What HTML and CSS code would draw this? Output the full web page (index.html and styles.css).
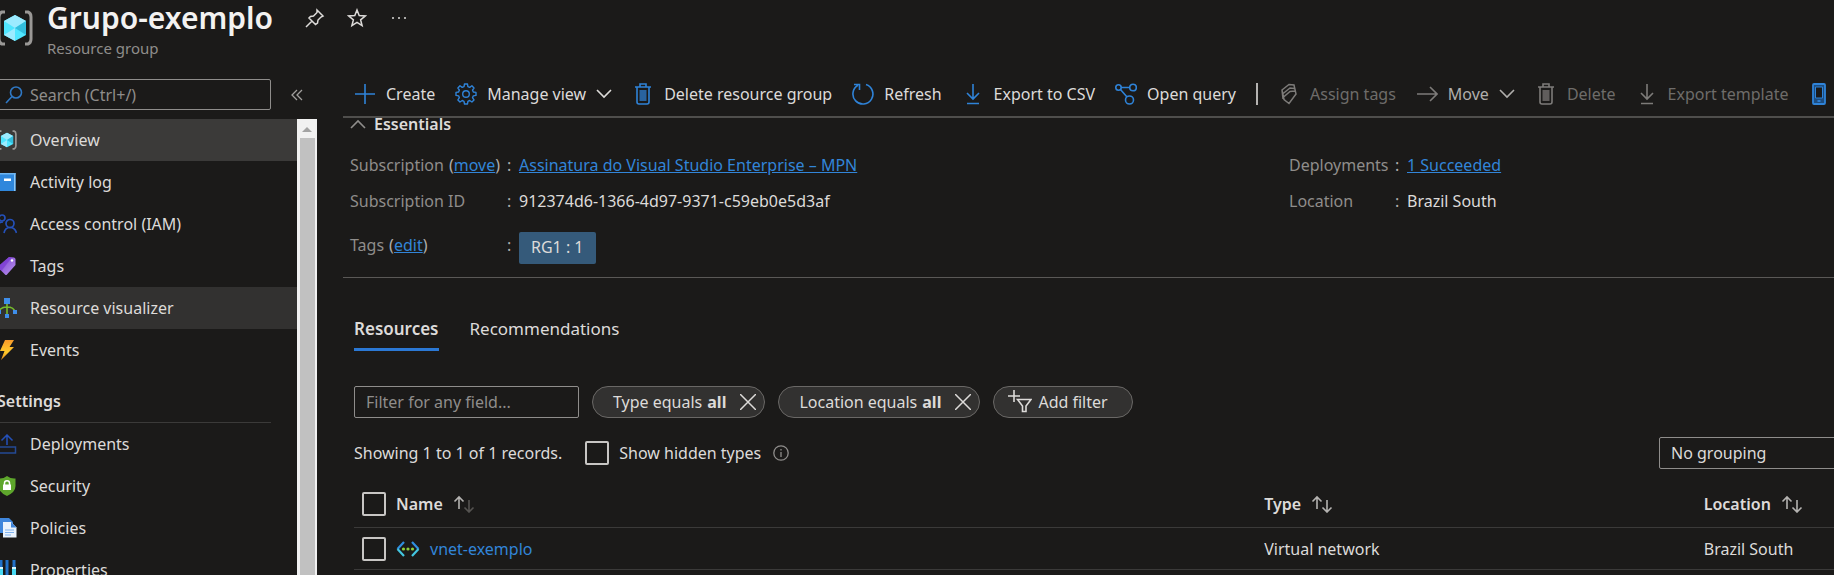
FILE: index.html
```
<!DOCTYPE html>
<html lang="en">
<head>
    <meta charset="utf-8">
    <title>Grupo-exemplo</title>
    <link rel="stylesheet" href="styles.css">
</head>
<body>
    <svg class="defs">
        <defs>
            <symbol id="group" viewBox="0 0 36 36">
                <path d="M8 2H5Q2 3 2 7v22q0 4 3 5h3M28 2h3q3 1 3 5v22q0 4-3 5h-3" fill="none" stroke="#9a9896" stroke-width="3"/>
                <path d="M18 5l11 6v14l-11 6-11-6V11z" fill="#50e6ff"/>
                <path d="M18 5l11 6-11 7-11-7z" fill="#9cebff"/>
                <path d="M18 18v13L7 25z" fill="#9cebff"/>
                <path d="M18 18l11-7v14z" fill="#32bedd"/>
            </symbol>
            <symbol id="chevron" viewBox="0 0 16 10">
                <path d="M1 1l7 7 7-7" fill="none" stroke="currentColor" stroke-width="1.6"/>
            </symbol>
            <symbol id="trash" viewBox="0 0 22 22">
                <path d="M3 4h16M8 3.500V1h6v2.500M5 4v15q0 2 2 2h8q2 0 2-2V4" fill="none" stroke="currentColor" stroke-width="1.6"/>
                <path d="M7.500 7h7v11h-7z" fill="currentColor" opacity=".7"/>
            </symbol>
            <symbol id="download" viewBox="0 0 22 22">
                <path d="M11 1v15M5 10l6 6 6-6M5 20.500h12" fill="none" stroke="currentColor" stroke-width="1.6"/>
            </symbol>
            <symbol id="sort" viewBox="0 0 22 18">
                <path d="M6 14V2M1.500 6.500L6 2l4.500 4.500" fill="none" stroke="#b5b3b1" stroke-width="1.6"/>
                <path class="down" d="M16 5v12M11.500 12.500L16 17l4.500-4.500" fill="none" stroke="currentColor" stroke-width="1.6"/>
            </symbol>
            <symbol id="close" viewBox="0 0 16 16">
                <path d="M0 0l16 16M16 0L0 16" fill="none" stroke="currentColor" stroke-width="1.5"/>
            </symbol>
            <linearGradient id="purple" x1="0" y1="0" x2="1" y2="1">
                <stop offset="0" stop-color="#7b3fd0"/><stop offset="1" stop-color="#b893ee"/>
            </linearGradient>
            <linearGradient id="bolt" x1="0" y1="0" x2="0" y2="1">
                <stop offset="0" stop-color="#f79a2b"/><stop offset=".6" stop-color="#ffca2c"/><stop offset="1" stop-color="#e88a1c"/>
            </linearGradient>
        </defs>
    </svg>

    <div class="page">
        <header class="header">
            <svg class="header-icon"><use href="#group"/></svg>
            <div class="header-text">
                <h1>Grupo-exemplo</h1>
                <p>Resource group</p>
            </div>
            <div class="header-actions">
                <button aria-label="Pin">
                    <svg width="20" height="20" viewBox="0 0 20 20" fill="none" stroke="currentColor" stroke-width="1.5"><path d="M12 2l6 6-2 1-3 3-.500 3-2 1.500L4 10l1.500-1.500 3-.500L12 4.500zM7 13l-6 6"/></svg>
                </button>
                <button aria-label="Favorite">
                    <svg width="20" height="20" viewBox="0 0 20 20" fill="none" stroke="currentColor" stroke-width="1.5"><path d="M10 2l2.200 5.600 6 .400-4.600 3.800 1.500 5.900L10 14.400l-5.100 3.300 1.500-5.900L1.800 8l6-.400z"/></svg>
                </button>
                <button aria-label="More">
                    <svg width="20" height="20" viewBox="0 0 20 20" fill="currentColor"><circle cx="4" cy="10" r="1"/><circle cx="10" cy="10" r="1"/><circle cx="16" cy="10" r="1"/></svg>
                </button>
            </div>
        </header>

        <div class="columns">
            <aside class="sidebar">
                <div class="search-row">
                    <label class="search">
                        <svg width="18" height="18" viewBox="0 0 18 18" fill="none" stroke="#2f78c4" stroke-width="1.6"><circle cx="11" cy="6.500" r="5.500"/><path d="M7 10.500L1 17"/></svg>
                        <input type="text" placeholder="Search (Ctrl+/)" aria-label="Search">
                    </label>
                    <button class="collapse" aria-label="Collapse">
                        <svg width="12" height="12" viewBox="0 0 12 12" fill="none" stroke="currentColor" stroke-width="1.3"><path d="M6 1L1 6l5 5M11 1L6 6l5 5"/></svg>
                    </button>
                </div>
                <div class="menu-wrap">
                    <nav class="menu">
                        <a href="#" class="active"><svg viewBox="0 0 36 36"><use href="#group"/></svg>Overview</a>
                        <a href="#"><svg viewBox="0 0 20 20"><path d="M1 1h17.500v18H1z" fill="#2f87dc"/><path d="M17 1h1.500v18H17z" fill="#8cc8f8"/><path d="M1 1h17.500v1.500H1z" fill="#6fb5f0"/><path d="M7 6.500h7v2.500H7z" fill="#fff"/></svg>Activity log</a>
                        <a href="#"><svg viewBox="0 0 20 20" fill="none" stroke="#2450b8" stroke-width="1.7"><circle cx="5" cy="4" r="3"/><path d="M0 12q1-4 6-4"/><circle cx="13" cy="9.500" r="4"/><path d="M7 19q1-5.500 6-5.500t6.500 5.500"/></svg>Access control (IAM)</a>
                        <a href="#"><svg viewBox="0 0 20 20"><path d="M12 1l5 .500q1.500.500 1.500 2V9L10 18.500q-1 1-2 0L1.500 12q-1-1 0-2z" fill="url(#purple)"/><path d="M12 1l3 .300L4.500 15l-3-3q-1-1 0-2z" fill="#7633d0" opacity=".6"/><circle cx="15" cy="4.500" r="1.200" fill="#fff"/></svg>Tags</a>
                        <a href="#" class="hover"><svg viewBox="0 0 20 20"><path d="M10 4v13M2 14q1-5 8-5t8 5" fill="none" stroke="#76bc2d" stroke-width="1.6"/><path d="M7 0h6v6H7zM0 12h4v4H0zM16 12h4v4h-4zM8 16h4v4H8z" fill="#3f8eea"/></svg>Resource visualizer</a>
                        <a href="#"><svg viewBox="0 0 20 20"><path d="M8 0h9l-4.500 7H17L4 20l3.500-9H3z" fill="url(#bolt)"/></svg>Events</a>
                        <h2>Settings</h2>
                        <a href="#"><svg viewBox="0 0 20 20" fill="none" stroke="#2450b8" stroke-width="1.5"><path d="M10 11V1M4.500 6.500L10 1l5.500 5.500"/><path d="M1 13h17.500v6H1z" stroke="#244a94"/></svg>Deployments</a>
                        <a href="#"><svg viewBox="0 0 20 20"><path d="M10 0q4 3 8.500 2.500V10q0 6-8.500 10Q1.500 16 1.500 10V2.500Q6 3 10 0z" fill="#5ea62c"/><path d="M6 8.500h8v5.500H6z" fill="#fff"/><path d="M7.500 9V7q0-2.300 2.500-2.300T12.500 7v2" fill="none" stroke="#fff" stroke-width="1.5"/></svg>Security</a>
                        <a href="#"><svg viewBox="0 0 20 20"><path d="M1 0h11l4 4v11H1z" fill="#3f86dc"/><path d="M6 4h8l5.500 5.500V19.500H6z" fill="#eaf3fd"/><path d="M14 4l5.500 5.500H14z" fill="#3f86dc"/><path d="M8 12h9M8 14.500h9M8 17h6" stroke="#7fb2ee" stroke-width="1.200"/></svg>Policies</a>
                        <a href="#"><svg viewBox="0 0 20 20"><path d="M2.500 0h3v20h-3zM8.500 0h3v20h-3zM15.500 0h3v20h-3z" fill="#2070c8"/><path d="M2 7h4v13H2zM15 7h4v13h-4z" fill="#48d8f2"/><path d="M2 7h4v2H2zM15 7h4v2h-4z" fill="#d5f6ff"/></svg>Properties</a>
                    </nav>
                    <div class="scrollbar"><span class="arrow"></span><span class="thumb"></span></div>
                </div>
            </aside>

            <main class="main">
                <div class="toolbar">
                    <button><svg class="icon" viewBox="0 0 22 22"><path d="M11 1v20M1 11h20" fill="none" stroke="currentColor" stroke-width="1.6"/></svg>Create</button>
                    <button><svg class="icon" viewBox="0 0 22 22" fill="none" stroke="currentColor" stroke-width="1.4" stroke-linejoin="round"><circle cx="11" cy="11" r="3.300"/><path d="M9.500 1h3l.400 2.600 1.800.800 2.200-1.600 2.100 2.200-1.500 2.100.800 1.900 2.700.400v3l-2.700.500-.800 1.800 1.500 2.200-2.100 2.100-2.200-1.500-1.800.800-.400 2.700h-3l-.500-2.700-1.800-.800L5 19l-2.100-2.100 1.500-2.200-.800-1.800L1 12.400v-3L3.600 9l.800-1.900L2.900 5 5 2.800l2.200 1.600L9 3.600z"/></svg>Manage view<svg class="chevron"><use href="#chevron"/></svg></button>
                    <button><svg class="icon"><use href="#trash"/></svg>Delete resource group</button>
                    <button><svg class="icon" viewBox="0 0 22 22" fill="none" stroke="currentColor" stroke-width="1.6"><path d="M14 1.500A10 10 0 1 1 6 2.300M2 1.500h5.500V7"/></svg>Refresh</button>
                    <button><svg class="icon"><use href="#download"/></svg>Export to CSV</button>
                    <button><svg class="icon" viewBox="0 0 22 22" fill="none" stroke="currentColor" stroke-width="1.6"><circle cx="3.500" cy="4.500" r="2.700"/><circle cx="18" cy="4.500" r="3.300"/><circle cx="14.500" cy="17" r="4"/><path d="M6 4.500h8.700M5.500 6.500l6.500 7.500"/></svg>Open query</button>
                    <span class="separator"></span>
                    <button disabled><svg class="icon" viewBox="0 0 22 22" fill="none" stroke="currentColor" stroke-width="1.5"><path d="M4 7l7-5.500 5 .500 2 9-7 9.500-5-4zM4 7l1 9M4.500 11L12 5l4.500.500M5 14.500l7-6 5-.500"/></svg>Assign tags</button>
                    <button class="dim"><svg class="icon" viewBox="0 0 22 22"><path d="M1 11h20M14 4l7 7-7 7" fill="none" stroke="currentColor" stroke-width="1.6"/></svg>Move<svg class="chevron"><use href="#chevron"/></svg></button>
                    <button disabled><svg class="icon"><use href="#trash"/></svg>Delete</button>
                    <button disabled><svg class="icon"><use href="#download"/></svg>Export template</button>
                    <button aria-label="Open in mobile"><svg class="icon" viewBox="0 0 22 22" fill="none" stroke="currentColor" stroke-width="1.800"><rect x="5" y="1" width="12" height="20" rx="1" fill="#1d4d80"/><path d="M7.500 4h7v11h-7z" fill="#1b1a19" stroke-width="1"/><path d="M9.500 18h3"/></svg></button>
                </div>

                <section class="essentials">
                    <button class="essentials-toggle"><svg class="chevron up"><use href="#chevron"/></svg><span>Essentials</span></button>
                    <div class="details">
                        <dl>
                            <div><dt>Subscription <i>(<a href="#">move</a>)</i></dt><dd><a href="#">Assinatura do Visual Studio Enterprise – MPN</a></dd></div>
                            <div><dt>Subscription ID</dt><dd>912374d6-1366-4d97-9371-c59eb0e5d3af</dd></div>
                            <div class="tags"><dt>Tags <i>(<a href="#">edit</a>)</i></dt><dd><span class="tag">RG1 : 1</span></dd></div>
                        </dl>
                        <dl class="short">
                            <div><dt>Deployments</dt><dd><a href="#">1 Succeeded</a></dd></div>
                            <div><dt>Location</dt><dd>Brazil South</dd></div>
                        </dl>
                    </div>
                </section>

                <section class="resources">
                    <div class="tabs" role="tablist">
                        <button role="tab" aria-selected="true" class="selected">Resources</button>
                        <button role="tab" aria-selected="false">Recommendations</button>
                    </div>
                    <div class="filters">
                        <input type="text" class="filter" placeholder="Filter for any field..." aria-label="Filter for any field">
                        <button class="pill">Type equals <b>all</b><svg><use href="#close"/></svg></button>
                        <button class="pill">Location equals <b>all</b><svg><use href="#close"/></svg></button>
                        <button class="pill add"><svg viewBox="0 0 24 24" fill="none" stroke="currentColor" stroke-width="1.6"><path d="M6 0v12M0 6h12M9.500 9.500h13.500l-5 6.500v5.500h-3.500V16z"/></svg>Add filter</button>
                    </div>
                    <div class="records">
                        <span class="count">Showing 1 to 1 of 1 records.</span>
                        <input type="checkbox" id="hidden">
                        <label for="hidden">Show hidden types</label>
                        <svg width="16" height="16" viewBox="0 0 16 16" fill="none" stroke="#8f8d8b" stroke-width="1.3"><circle cx="8" cy="8" r="7.200"/><path d="M8 7v5M8 4v1.500"/></svg>
                        <select class="grouping" aria-label="Grouping"><option>No grouping</option></select>
                    </div>
                    <table>
                        <thead>
                            <tr>
                                <th class="name"><div><input type="checkbox" aria-label="Select all">Name<svg class="sort up-only"><use href="#sort"/></svg></div></th>
                                <th class="type"><div>Type<svg class="sort"><use href="#sort"/></svg></div></th>
                                <th><div>Location<svg class="sort"><use href="#sort"/></svg></div></th>
                            </tr>
                        </thead>
                        <tbody>
                            <tr>
                                <td class="name"><div><input type="checkbox" aria-label="Select vnet-exemplo"><svg width="24" height="16" viewBox="0 0 24 16"><path d="M8 1L1.500 8M16 1l6.500 7" fill="none" stroke="#2f8fe0" stroke-width="2.200"/><path d="M1.500 8L8 15M22.500 8L16 15" fill="none" stroke="#43c6e0" stroke-width="2.200"/><g fill="#8bd03c"><circle cx="7.500" cy="8" r="1.600"/><circle cx="12" cy="8" r="1.600"/><circle cx="16.500" cy="8" r="1.600"/></g></svg><a href="#">vnet-exemplo</a></div></td>
                                <td>Virtual network</td>
                                <td>Brazil South</td>
                            </tr>
                        </tbody>
                    </table>
                </section>
            </main>
        </div>
    </div>
</body>
</html>
```
FILE: styles.css
```
* {
    box-sizing: border-box;
}

body {
    margin: 0;
    font-family: "Noto Sans", "Open Sans", sans-serif;
    font-size: 16px;
    line-height: 22px;
    color: #dddbd9;
    background: #1b1a19;
}

.defs {
    display: block;
    width: 0;
    height: 0;
}

button, input, select {
    font: inherit;
    color: inherit;
}

button {
    padding: 0;
    border: none;
    background: none;
    white-space: nowrap;
    cursor: pointer;
}

svg {
    flex: none;
}

a {
    color: #3285d8;
}

h1, h2, p, dl, dd {
    margin: 0;
}

.page {
    height: 100vh;
    display: flex;
    flex-direction: column;
    overflow: hidden;
}

/* header */
.header {
    display: flex;
    align-items: flex-start;
    height: 79px;
}

.header-icon {
    width: 36px;
    height: 36px;
    margin: 10px 14px 0 -3px;
}

h1 {
    font-size: 30px;
    font-weight: 600;
    line-height: 36px;
    color: #f3f2f1;
}

.header p {
    font-size: 15px;
    line-height: 24px;
    color: #8f8d8b;
}

.header-actions {
    display: flex;
    gap: 22px;
    margin: 8px 0 0 32px;
}

.header-actions svg {
    display: block;
}

.columns {
    flex: 1;
    display: flex;
    min-height: 0;
}

/* sidebar */
.sidebar {
    flex: none;
    width: 327px;
    margin-left: -10px;
    display: flex;
    flex-direction: column;
}

.search-row {
    display: flex;
    align-items: center;
    gap: 20px;
    height: 31px;
    margin-bottom: 9px;
}

.search {
    display: flex;
    align-items: center;
    gap: 7px;
    width: 281px;
    height: 31px;
    padding-left: 14px;
    border: 1px solid #8f8d8b;
    border-radius: 2px;
}

.search input {
    min-width: 0;
    flex: 1;
    padding: 0;
    border: none;
    outline: none;
    background: none;
}

::placeholder {
    color: #8f8d8b;
    opacity: 1;
}

.collapse {
    color: #a19f9d;
}

.collapse svg {
    display: block;
}

.menu-wrap {
    flex: 1;
    display: flex;
    min-height: 0;
}

.menu {
    flex: 1;
    overflow: hidden;
}

.menu a {
    display: flex;
    align-items: center;
    gap: 13px;
    height: 42px;
    padding-left: 7px;
    color: inherit;
    text-decoration: none;
}

.menu svg {
    width: 20px;
    height: 20px;
}

.menu .active {
    background: #3b3a39;
}

.menu .hover {
    background: #323130;
}

.menu h2 {
    height: 52px;
    margin: 0 26px 0 0;
    padding: 19px 0 0 7px;
    border-bottom: 1px solid #3b3a39;
    font-size: 16px;
    font-weight: 600;
    line-height: 22px;
}

.scrollbar {
    display: flex;
    flex-direction: column;
    align-items: center;
    width: 20px;
    background: #f1f1f1;
}

.arrow {
    margin: 8px 0 6px;
    border: 5px solid transparent;
    border-top: none;
    border-bottom-color: #a3a3a3;
}

.thumb {
    flex: 1;
    width: 15px;
    background: #c1c1c1;
}

/* toolbar */
.main {
    flex: 1;
    min-width: 0;
    margin-left: 26px;
    overflow: hidden;
}

.toolbar {
    display: flex;
    align-items: center;
    gap: 20px;
    height: 39px;
    padding: 0 0 7px 11px;
    border-bottom: 2px solid #4f4e4c;
}

.toolbar button {
    display: flex;
    align-items: center;
    gap: 10px;
    flex: none;
}

.icon {
    width: 22px;
    height: 22px;
    color: #2f83d8;
}

.chevron {
    width: 16px;
    height: 10px;
}

.separator {
    width: 2px;
    height: 22px;
    background: #b5b3b1;
}

.toolbar button:disabled {
    color: #6e6c6a;
    cursor: default;
}

.toolbar button:disabled .icon,
.dim .icon {
    color: #7d7b79;
}

.dim {
    color: #b0aeac;
}

/* essentials */
.essentials {
    padding-left: 7px;
    height: 160px;
    border-bottom: 1px solid #5a5856;
    overflow: hidden;
}

.essentials-toggle {
    display: flex;
    align-items: center;
    gap: 8px;
    margin-top: -5px;
    font-weight: 600;
}

.up {
    transform: rotate(180deg);
    color: #8f8d8b;
}

.details {
    display: grid;
    grid-template-columns: 939fr 545fr;
    margin-top: 18px;
}

.details dl > div {
    display: flex;
    height: 36px;
    line-height: 24px;
}

.details dt {
    display: flex;
    gap: 5px;
    width: 157px;
    color: #8f8d8b;
}

.details dt i {
    font-style: normal;
    color: #b0aeac;
}

.short dt {
    width: 106px;
}

.details dd {
    display: flex;
}

.details dd::before {
    content: ":";
    width: 12px;
    color: #b0aeac;
}

.details .tags {
    padding-top: 8px;
    height: 44px;
}

.tag {
    height: 32px;
    margin-top: -1px;
    padding: 0 12px;
    border-radius: 2px;
    background: #355a7a;
    line-height: 30px;
}

/* resources */
.resources {
    padding-left: 11px;
}

.tabs {
    display: flex;
    gap: 31px;
    padding-top: 37px;
}

.tabs button {
    height: 36px;
    padding-bottom: 6px;
    border-bottom: 3px solid transparent;
    font-size: 17px;
}

.tabs .selected {
    font-weight: 600;
    border-color: #2b78d4;
}

.filters {
    display: flex;
    gap: 13px;
    margin-top: 35px;
}

.filter {
    width: 225px;
    height: 32px;
    padding: 0 11px;
    border: 1px solid #8f8d8b;
    border-radius: 2px;
    background: none;
}

.pill {
    display: flex;
    align-items: center;
    height: 32px;
    padding: 0 8px 0 20px;
    border: 1px solid #6a6866;
    border-radius: 16px;
    background: #323130;
}

.pill b {
    margin-left: 5px;
}

.pill svg {
    width: 16px;
    height: 16px;
    margin-left: 14px;
}

.add {
    padding: 0 24px 0 14px;
}

.add svg {
    width: 24px;
    height: 24px;
    margin: 0 6px 0 0;
}

.records {
    display: flex;
    align-items: center;
    height: 32px;
    margin-top: 19px;
    white-space: nowrap;
}

.count {
    margin-right: 23px;
}

.records label {
    margin: 0 12px 0 10px;
}

input[type="checkbox"] {
    appearance: none;
    flex: none;
    width: 24px;
    height: 24px;
    margin: 0;
    border: 2px solid #c8c6c4;
    border-radius: 2px;
}

/* runs under the right edge of the blade */
.grouping {
    width: 211px;
    height: 32px;
    margin: 0 -36px 0 auto;
    padding: 0 7px;
    border: 1px solid #8f8d8b;
    border-radius: 2px;
    background: #1b1a19;
}

table {
    width: 100%;
    margin-top: 14px;
    border-collapse: collapse;
    table-layout: fixed;
}

th, td {
    height: 42px;
    padding: 0;
    border-bottom: 1px solid #3b3a39;
    text-align: left;
}

th {
    height: 44px;
    padding-bottom: 2px;
    font-weight: 600;
}

td {
    padding-top: 2px;
}

.name {
    width: 61.5%;
}

.type {
    width: 29.7%;
}

th div, td div {
    display: flex;
    align-items: center;
}

.name div {
    gap: 10px;
    padding-left: 8px;
}

.name a {
    text-decoration: none;
}

.sort {
    width: 22px;
    height: 18px;
    margin-left: 10px;
    color: #b5b3b1;
}

.up-only {
    margin-left: 0;
    color: #555351;
}
```
